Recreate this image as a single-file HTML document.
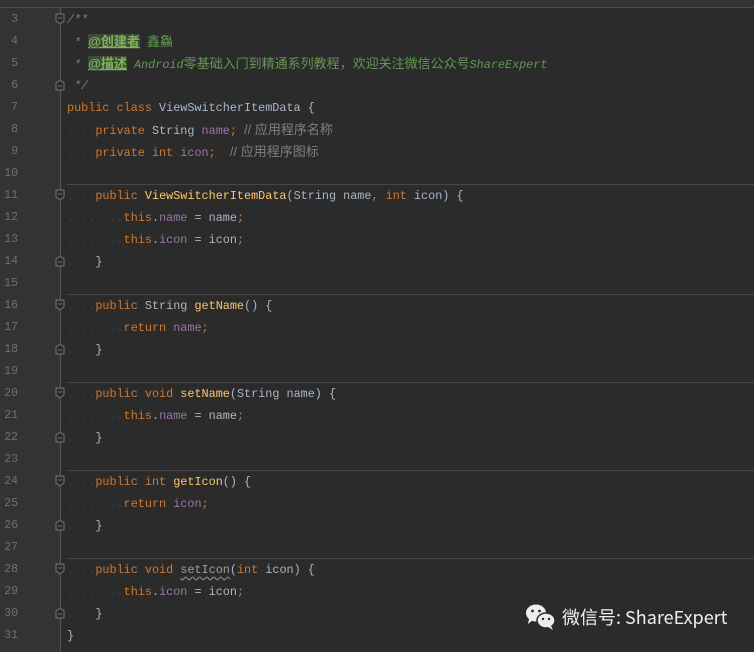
<!DOCTYPE html>
<html><head><meta charset="utf-8"><style>
body{margin:0;width:754px;height:652px;background:#2b2b2b;overflow:hidden;position:relative;font-family:"Liberation Mono","Noto Sans CJK SC",monospace;font-size:11.8px;color:#a9b7c6}
.gut{position:absolute;left:0;top:0;width:60px;height:652px;background:#313335}
.top{position:absolute;left:0;top:0;width:754px;height:7px;background:#313335;border-bottom:1px solid #4a4a4a}
.vl{position:absolute;left:60px;top:8px;width:1px;height:644px;background:#555}
.ln{position:absolute;left:0;width:18px;text-align:right;color:#6e7072;font-size:11.5px;line-height:22px;margin-top:2px}
.c{position:absolute;left:67px;line-height:22px;white-space:pre;margin-top:2px}
.sep{position:absolute;left:67px;right:0;height:1px;background:#474747}
.k{color:#cc7832}.m{color:#ffc66d}.f{color:#9876aa}.g{color:#808080}.d{color:#629755;font-style:italic}
.dg{color:#629755;font-family:"Liberation Sans","Noto Sans CJK SC",sans-serif;font-style:normal;font-size:13px}
.tag{background:#3e4c35;color:#7fb35c;font-weight:bold;font-style:normal;text-decoration:underline;font-family:"Liberation Sans","Noto Sans CJK SC",sans-serif;font-size:13px}
.cm{font-family:"Liberation Sans","Noto Sans CJK SC",sans-serif;font-size:13px;color:#808080}
.dot{color:#3f3f3f}
.u{color:#a0a0a0;text-decoration:underline wavy #888;text-underline-offset:3px}
.fold{position:absolute;left:55px;width:10px;height:12px}
.wm{position:absolute;top:603px;color:#eee;font-family:"Noto Sans CJK SC",sans-serif;font-size:18px;line-height:28px}
</style></head><body>
<div class="gut"></div>
<div class="top"></div>
<div class="vl"></div>

<div class="ln" style="top:7px">3</div><div class="ln" style="top:29px">4</div><div class="ln" style="top:51px">5</div><div class="ln" style="top:73px">6</div><div class="ln" style="top:95px">7</div><div class="ln" style="top:117px">8</div><div class="ln" style="top:139px">9</div><div class="ln" style="top:161px">10</div><div class="ln" style="top:183px">11</div><div class="ln" style="top:205px">12</div><div class="ln" style="top:227px">13</div><div class="ln" style="top:249px">14</div><div class="ln" style="top:271px">15</div><div class="ln" style="top:293px">16</div><div class="ln" style="top:315px">17</div><div class="ln" style="top:337px">18</div><div class="ln" style="top:359px">19</div><div class="ln" style="top:381px">20</div><div class="ln" style="top:403px">21</div><div class="ln" style="top:425px">22</div><div class="ln" style="top:447px">23</div><div class="ln" style="top:469px">24</div><div class="ln" style="top:491px">25</div><div class="ln" style="top:513px">26</div><div class="ln" style="top:535px">27</div><div class="ln" style="top:557px">28</div><div class="ln" style="top:579px">29</div><div class="ln" style="top:601px">30</div><div class="ln" style="top:623px">31</div>

<div class="sep" style="top:184px"></div><div class="sep" style="top:294px"></div><div class="sep" style="top:382px"></div><div class="sep" style="top:470px"></div><div class="sep" style="top:558px"></div>

<svg class="fold" style="top:13px" viewBox="0 0 10 12"><path d="M1 1H9V8L5 11L1 8Z M3 5H7" fill="#2b2b2b" stroke="#777"/></svg>
<svg class="fold" style="top:79px" viewBox="0 0 10 12"><path d="M1 11H9V4L5 1L1 4Z M3 7H7" fill="#2b2b2b" stroke="#777"/></svg>
<svg class="fold" style="top:189px" viewBox="0 0 10 12"><path d="M1 1H9V8L5 11L1 8Z M3 5H7" fill="#2b2b2b" stroke="#777"/></svg>
<svg class="fold" style="top:255px" viewBox="0 0 10 12"><path d="M1 11H9V4L5 1L1 4Z M3 7H7" fill="#2b2b2b" stroke="#777"/></svg>
<svg class="fold" style="top:299px" viewBox="0 0 10 12"><path d="M1 1H9V8L5 11L1 8Z M3 5H7" fill="#2b2b2b" stroke="#777"/></svg>
<svg class="fold" style="top:343px" viewBox="0 0 10 12"><path d="M1 11H9V4L5 1L1 4Z M3 7H7" fill="#2b2b2b" stroke="#777"/></svg>
<svg class="fold" style="top:387px" viewBox="0 0 10 12"><path d="M1 1H9V8L5 11L1 8Z M3 5H7" fill="#2b2b2b" stroke="#777"/></svg>
<svg class="fold" style="top:431px" viewBox="0 0 10 12"><path d="M1 11H9V4L5 1L1 4Z M3 7H7" fill="#2b2b2b" stroke="#777"/></svg>
<svg class="fold" style="top:475px" viewBox="0 0 10 12"><path d="M1 1H9V8L5 11L1 8Z M3 5H7" fill="#2b2b2b" stroke="#777"/></svg>
<svg class="fold" style="top:519px" viewBox="0 0 10 12"><path d="M1 11H9V4L5 1L1 4Z M3 7H7" fill="#2b2b2b" stroke="#777"/></svg>
<svg class="fold" style="top:563px" viewBox="0 0 10 12"><path d="M1 1H9V8L5 11L1 8Z M3 5H7" fill="#2b2b2b" stroke="#777"/></svg>
<svg class="fold" style="top:607px" viewBox="0 0 10 12"><path d="M1 11H9V4L5 1L1 4Z M3 7H7" fill="#2b2b2b" stroke="#777"/></svg>

<div class="c d" style="top:7px">/**</div>
<div class="c d" style="top:29px"> * <span class="tag">@创建者</span> <span class="dg">鑫鱻</span></div>
<div class="c d" style="top:51px"> * <span class="tag">@描述</span> Android<span class="dg">零基础入门到精通系列教程，欢迎关注微信公众号</span>ShareExpert</div>
<div class="c d" style="top:73px"> */</div>
<div class="c" style="top:95px"><span class="k">public class</span> ViewSwitcherItemData {</div>
<div class="c" style="top:117px"><span class="dot">....</span><span class="k">private</span> String <span class="f">name</span><span class="k">;</span> <span class="cm">// 应用程序名称</span></div>
<div class="c" style="top:139px"><span class="dot">....</span><span class="k">private int</span> <span class="f">icon</span><span class="k">;</span>  <span class="cm">// 应用程序图标</span></div>
<div class="c" style="top:183px"><span class="dot">....</span><span class="k">public</span> <span class="m">ViewSwitcherItemData</span>(String name<span class="k">,</span> <span class="k">int</span> icon) {</div>
<div class="c" style="top:205px"><span class="dot">........</span><span class="k">this</span>.<span class="f">name</span> = name<span class="k">;</span></div>
<div class="c" style="top:227px"><span class="dot">........</span><span class="k">this</span>.<span class="f">icon</span> = icon<span class="k">;</span></div>
<div class="c" style="top:249px"><span class="dot">....</span>}</div>
<div class="c" style="top:293px"><span class="dot">....</span><span class="k">public</span> String <span class="m">getName</span>() {</div>
<div class="c" style="top:315px"><span class="dot">........</span><span class="k">return</span> <span class="f">name</span><span class="k">;</span></div>
<div class="c" style="top:337px"><span class="dot">....</span>}</div>
<div class="c" style="top:381px"><span class="dot">....</span><span class="k">public void</span> <span class="m">setName</span>(String name) {</div>
<div class="c" style="top:403px"><span class="dot">........</span><span class="k">this</span>.<span class="f">name</span> = name<span class="k">;</span></div>
<div class="c" style="top:425px"><span class="dot">....</span>}</div>
<div class="c" style="top:469px"><span class="dot">....</span><span class="k">public int</span> <span class="m">getIcon</span>() {</div>
<div class="c" style="top:491px"><span class="dot">........</span><span class="k">return</span> <span class="f">icon</span><span class="k">;</span></div>
<div class="c" style="top:513px"><span class="dot">....</span>}</div>
<div class="c" style="top:557px"><span class="dot">....</span><span class="k">public void</span> <span class="u">setIcon</span>(<span class="k">int</span> icon) {</div>
<div class="c" style="top:579px"><span class="dot">........</span><span class="k">this</span>.<span class="f">icon</span> = icon<span class="k">;</span></div>
<div class="c" style="top:601px"><span class="dot">....</span>}</div>
<div class="c" style="top:623px">}</div>

<svg style="position:absolute;left:525px;top:603px" width="32" height="28" viewBox="0 0 32 28">
<ellipse cx="11" cy="10" rx="10" ry="8.5" fill="#eee"/><path d="M4 16 L3 21 L8 17Z" fill="#eee"/>
<circle cx="7.5" cy="8" r="1.4" fill="#2b2b2b"/><circle cx="14.5" cy="8" r="1.4" fill="#2b2b2b"/>
<ellipse cx="21" cy="17.5" rx="9" ry="7.5" stroke="#2b2b2b" stroke-width="1.5" fill="#eee"/><path d="M26 23 L28 27 L23 24Z" fill="#eee"/>
<circle cx="18" cy="16" r="1.2" fill="#2b2b2b"/><circle cx="24" cy="16" r="1.2" fill="#2b2b2b"/>
</svg>
<div class="wm" style="left:562px">微信号: ShareExpert</div>
</body></html>
